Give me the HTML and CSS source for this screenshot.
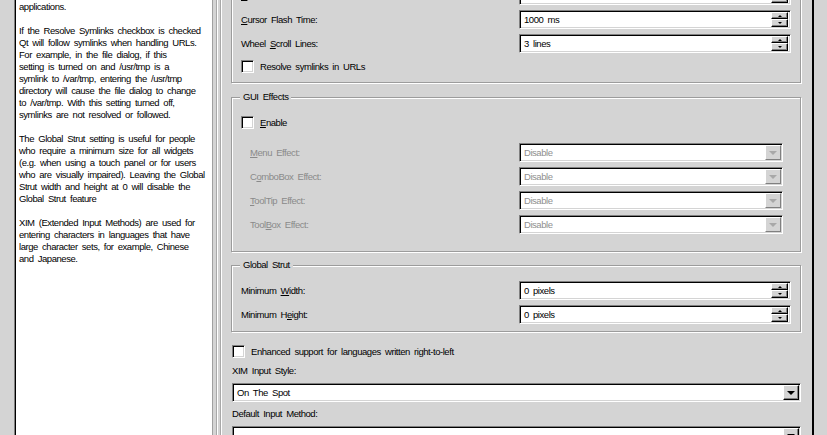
FILE: index.html
```html
<!DOCTYPE html>
<html>
<head>
<meta charset="utf-8">
<link rel="stylesheet" href="styles.css">
</head>
<body>
<div class="win">
  <div class="left">
    <div class="textpane">
      <p>applications.</p>
      <p>If the Resolve Symlinks checkbox is checked<br>Qt will follow symlinks when handling URLs.<br>For example, in the file dialog, if this<br>setting is turned on and /usr/tmp is a<br>symlink to /var/tmp, entering the /usr/tmp<br>directory will cause the file dialog to change<br>to /var/tmp. With this setting turned off,<br>symlinks are not resolved or followed.</p>
      <p>The Global Strut setting is useful for people<br>who require a minimum size for all widgets<br>(e.g. when using a touch panel or for users<br>who are visually impaired). Leaving the Global<br>Strut width and height at 0 will disable the<br>Global Strut feature</p>
      <p>XIM (Extended Input Methods) are used for<br>entering characters in languages that have<br>large character sets, for example, Chinese<br>and Japanese.</p>
    </div>
  </div>
  <div class="split"></div>
  <div class="main">
    <div class="scroll">
      <div class="group first">
        <div class="form">
          <span class="lbl"><u>D</u>ouble Click Interval:</span>
          <div class="spin"><span class="val">400 ms</span><span class="btns"><span class="sb"><i class="up"></i></span><span class="sb"><i class="dn"></i></span></span></div>
          <span class="lbl"><u>C</u>ursor Flash Time:</span>
          <div class="spin"><span class="val">1000 ms</span><span class="btns"><span class="sb"><i class="up"></i></span><span class="sb"><i class="dn"></i></span></span></div>
          <span class="lbl">Wheel <u>S</u>croll Lines:</span>
          <div class="spin"><span class="val">3 lines</span><span class="btns"><span class="sb"><i class="up"></i></span><span class="sb"><i class="dn"></i></span></span></div>
          <label class="check span2"><span class="box"></span><span>Resolve symlinks in URLs</span></label>
        </div>
      </div>

      <div class="group gui">
        <span class="gtitle">GUI Effects</span>
        <label class="check"><span class="box"></span><span><u>E</u>nable</span></label>
        <div class="form inner">
          <span class="lbl dis"><u>M</u>enu Effect:</span>
          <div class="combo dis"><span class="val">Disable</span><span class="arrow"><i class="dn"></i></span></div>
          <span class="lbl dis">C<u>o</u>mboBox Effect:</span>
          <div class="combo dis"><span class="val">Disable</span><span class="arrow"><i class="dn"></i></span></div>
          <span class="lbl dis"><u>T</u>oolTip Effect:</span>
          <div class="combo dis"><span class="val">Disable</span><span class="arrow"><i class="dn"></i></span></div>
          <span class="lbl dis">Tool<u>B</u>ox Effect:</span>
          <div class="combo dis"><span class="val">Disable</span><span class="arrow"><i class="dn"></i></span></div>
        </div>
      </div>

      <div class="group strut">
        <span class="gtitle">Global Strut</span>
        <div class="form">
          <span class="lbl">Minimum <u>W</u>idth:</span>
          <div class="spin"><span class="val">0 pixels</span><span class="btns"><span class="sb"><i class="up"></i></span><span class="sb"><i class="dn"></i></span></span></div>
          <span class="lbl">Minimum H<u>e</u>ight:</span>
          <div class="spin"><span class="val">0 pixels</span><span class="btns"><span class="sb"><i class="up"></i></span><span class="sb"><i class="dn"></i></span></span></div>
        </div>
      </div>

      <label class="check rtl"><span class="box"></span><span>Enhanced support for languages written right-to-left</span></label>
      <div class="plain lbl-xim">XIM Input Style:</div>
      <div class="combo wide xim"><span class="val">On The Spot</span><span class="arrow"><i class="dn"></i></span></div>
      <div class="plain lbl-def">Default Input Method:</div>
      <div class="combo wide last"><span class="val">&nbsp;</span><span class="arrow"><i class="dn"></i></span></div>
    </div>
    <div class="rline"></div>
    <div class="rgrey"></div>
  </div>
</div>
</body>
</html>
```

FILE: styles.css
```css
* { box-sizing: border-box; }
html, body {
  margin: 0;
  padding: 0;
  background: #d4d4d4;
  overflow: hidden;
}
body {
  font-family: "Liberation Sans", Arial, sans-serif;
  font-size: 9.5px;
  line-height: 12px;
  letter-spacing: -0.45px;
  word-spacing: 2px;
  color: #000;
}
.win {
  display: flex;
  width: 827px;
  height: 435px;
  overflow: hidden;
}
.left {
  flex: none;
  width: 213px;
  height: 435px;
  padding-left: 14px;
  overflow: hidden;
}
.textpane {
  width: 199px;
  height: 600px;
  background: #fff;
  border-left: 1px solid #808080;
  border-right: 1px solid #a0a0a0;
  box-shadow: inset 1px 0 0 #000;
  padding: 1px 0 0 4px;
  white-space: nowrap;
}
.textpane p {
  margin: 0 0 12px 0;
}
.split {
  flex: none;
  width: 9px;
  height: 435px;
  border-left: 3px solid #d4d4d4;
  border-right: 1px solid #fff;
  background: linear-gradient(to right, #a8a8a8 0 1px, #fff 1px 2px, #d4d4d4 2px 4px, #a8a8a8 4px 5px);
}
.main {
  flex: 1;
  display: flex;
  height: 435px;
}
.scroll {
  flex: none;
  width: 590px;
  padding: 0 11px 0 9px;
  display: flex;
  flex-direction: column;
}
.rline {
  flex: none;
  width: 2px;
  background: #000;
}
.rgrey {
  flex: 1;
}

/* group boxes */
.group {
  position: relative;
  flex: none;
  border: 1px solid #9c9c9c;
  box-shadow: inset 1px 1px 0 #fff, 1px 1px 0 #fff;
  padding: 0 9px;
}
.group.first {
  margin-top: -40px;
  padding-top: 25px;
  padding-bottom: 7px;
}
.group.gui {
  margin-top: 14px;
  padding-top: 16px;
  padding-bottom: 17px;
}
.group.strut {
  margin-top: 13px;
  padding-top: 15px;
  padding-bottom: 7px;
}
.gtitle {
  position: absolute;
  left: 8px;
  top: -7px;
  padding: 0 3px;
  background: #d4d4d4;
  line-height: 12px;
}

.form {
  display: grid;
  grid-template-columns: 278px 1fr;
  row-gap: 5px;
  align-items: center;
}
.form.inner {
  grid-template-columns: 269px 1fr;
  margin: 12px 8px 0 9px;
}
.span2 { grid-column: 1 / 3; }
.lbl { white-space: nowrap; }
.dis { color: #8a8a8a; }
u { text-decoration: underline; text-underline-offset: 1px; }

/* checkbox */
.check {
  display: flex;
  align-items: center;
  height: 17px;
  gap: 6px;
  white-space: nowrap;
}
.check .box {
  flex: none;
  width: 13px;
  height: 13px;
  background: #fff;
  border: 1px solid;
  border-color: #808080 #fff #fff #808080;
  box-shadow: inset 1px 1px 0 #000, inset -1px -1px 0 #d4d4d4;
}
.check.rtl {
  margin-top: 13px;
  margin-left: 1px;
}

/* sunken fields */
.spin, .combo {
  flex: none;
  display: flex;
  height: 19px;
  background: #fff;
  border: 1px solid;
  border-color: #808080 #fff #fff #808080;
  box-shadow: inset 1px 1px 0 #000, inset -1px -1px 0 #d4d4d4;
  padding: 1px;
}
.spin .val, .combo .val {
  flex: 1;
  padding-left: 3px;
  line-height: 15px;
  white-space: nowrap;
  overflow: hidden;
}
.combo.dis .val { color: #8f8f8f; }
.btns {
  flex: none;
  width: 17px;
  display: flex;
  flex-direction: column;
  margin-right: 1px;
}
.sb {
  flex: 1;
  display: flex;
  align-items: center;
  justify-content: center;
  background: #d4d4d4;
  border: 1px solid;
  border-color: #fff #000 #000 #fff;
  box-shadow: inset -1px -1px 0 #808080;
}
.sb + .sb { flex: none; height: 8px; }
i.up, i.dn {
  display: block;
  width: 0;
  height: 0;
  border-left: 3px solid transparent;
  border-right: 3px solid transparent;
}
.sb i.up { border-bottom: 2px solid #000; border-left-width: 2px; border-right-width: 2px; }
.sb i.dn { border-top: 2px solid #000; border-left-width: 2px; border-right-width: 2px; }

.arrow {
  flex: none;
  width: 16px;
  display: flex;
  align-items: center;
  justify-content: center;
  background: #d4d4d4;
  border: 1px solid;
  border-color: #fff #000 #000 #fff;
  box-shadow: inset -1px -1px 0 #808080;
}
.arrow i.dn {
  border-top: 4px solid #000;
  border-left-width: 4px;
  border-right-width: 4px;
}
.combo.dis .arrow {
  border-color: #fff #808080 #808080 #fff;
  box-shadow: none;
}
.combo.dis .arrow i.dn { border-top-color: #a8a8a8; }

.combo.wide { margin-left: 1px; }
.plain { white-space: nowrap; margin-left: 1px; flex: none; }
.lbl-xim { margin-top: 7px; }
.combo.xim { margin-top: 6px; }
.lbl-def { margin-top: 6px; }
.combo.last { margin-top: 6px; }
```
